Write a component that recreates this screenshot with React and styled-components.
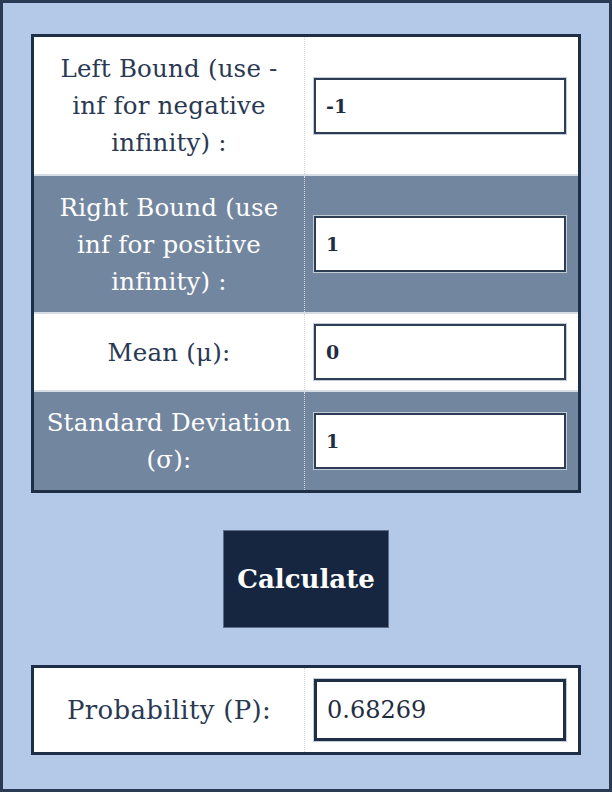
import React from 'react'
import styled, { createGlobalStyle } from 'styled-components'

const GlobalStyle = createGlobalStyle`
  html, body {
    margin: 0;
    padding: 0;
    background: #b3c9e7;
  }
  * { box-sizing: border-box; }
`

const fields = [
  { lines: ['Left Bound (use -', 'inf for negative', 'infinity) :'], value: '-1', height: 137, shaded: false },
  { lines: ['Right Bound (use', 'inf for positive', 'infinity) :'], value: '1', height: 138, shaded: true },
  { lines: ['Mean (μ):'], value: '0', height: 78, shaded: false },
  { lines: ['Standard Deviation', '(σ):'], value: '1', height: 100, shaded: true },
]

function App() {
  return (
    <>
      <GlobalStyle />
      <Frame>
        <Table>
          {fields.map((f) => (
            <Row key={f.lines[0]} shaded={f.shaded} style={{ height: f.height }}>
              <Label shaded={f.shaded}>
                {f.lines.map((l) => (
                  <Line key={l}>{l}</Line>
                ))}
              </Label>
              <Cell>
                <Field defaultValue={f.value} />
              </Cell>
            </Row>
          ))}
        </Table>
        <ButtonWrap>
          <CalcButton>Calculate</CalcButton>
        </ButtonWrap>
        <Result>
          <Row>
            <Label large>
              <Line>Probability (P):</Line>
            </Label>
            <Cell>
              <Output defaultValue="0.68269" readOnly />
            </Cell>
          </Row>
        </Result>
      </Frame>
    </>
  )
}

const Frame = styled.div`
  width: 612px;
  height: 792px;
  border: 3px solid #2a3a53;
  background: #b3c9e7;
  padding: 31px 28px 0 28px;
  font-family: "DejaVu Serif", "Liberation Serif", serif;
`

const Table = styled.div`
  border: 3px solid #1f2e47;
  box-shadow: inset 0 0 0 1px #c9d3e0;
  display: flex;
  flex-direction: column;
`

const Row = styled.div`
  display: grid;
  grid-template-columns: 271px 1fr;
  background: ${p => (p.shaded ? '#7386a0' : '#ffffff')};
  border-top: 2px solid #d6dce5;
  &:first-child {
    border-top: none;
  }
`

const Label = styled.div`
  display: flex;
  flex-direction: column;
  align-items: center;
  justify-content: center;
  text-align: center;
  font-size: ${p => (p.large ? '26px' : '24.5px')};
  line-height: 37px;
  letter-spacing: ${p => (p.large ? '0.3px' : '0.2px')};
  color: ${p => (p.shaded ? '#ffffff' : '#2a3953')};
  border-right: 1px dotted #d4d8de;
`

const Line = styled.span`
  display: block;
  white-space: nowrap;
`

const Cell = styled.div`
  display: flex;
  align-items: center;
  padding: 0 12px 0 9px;
`

const Field = styled.input`
  width: 100%;
  height: 56px;
  border: 2px solid #2e3d56;
  box-shadow: 0 0 0 1px #c2ccd9;
  background: #ffffff;
  padding: 0 10px;
  font-family: "DejaVu Serif", "Liberation Serif", serif;
  font-size: 19px;
  font-weight: bold;
  color: #1f2c42;
  outline: none;
`

const ButtonWrap = styled.div`
  display: flex;
  justify-content: center;
  padding: 37px 0;
`

const CalcButton = styled.button`
  width: 166px;
  height: 98px;
  border: 1px solid #5d6d84;
  background: #172640;
  color: #ffffff;
  font-family: "DejaVu Serif", "Liberation Serif", serif;
  font-size: 26px;
  font-weight: bold;
  letter-spacing: 0;
  padding: 0;
  cursor: pointer;
`

const Result = styled.div`
  border: 3px solid #1f2e47;
  background: #ffffff;
  height: 90px;
  display: flex;
  flex-direction: column;
  & > div {
    flex: 1;
  }
`

const Output = styled(Field)`
  height: 62px;
  border: 3px solid #1f2e47;
  font-size: 24px;
  font-weight: normal;
  padding: 0 10px;
`

export default App
